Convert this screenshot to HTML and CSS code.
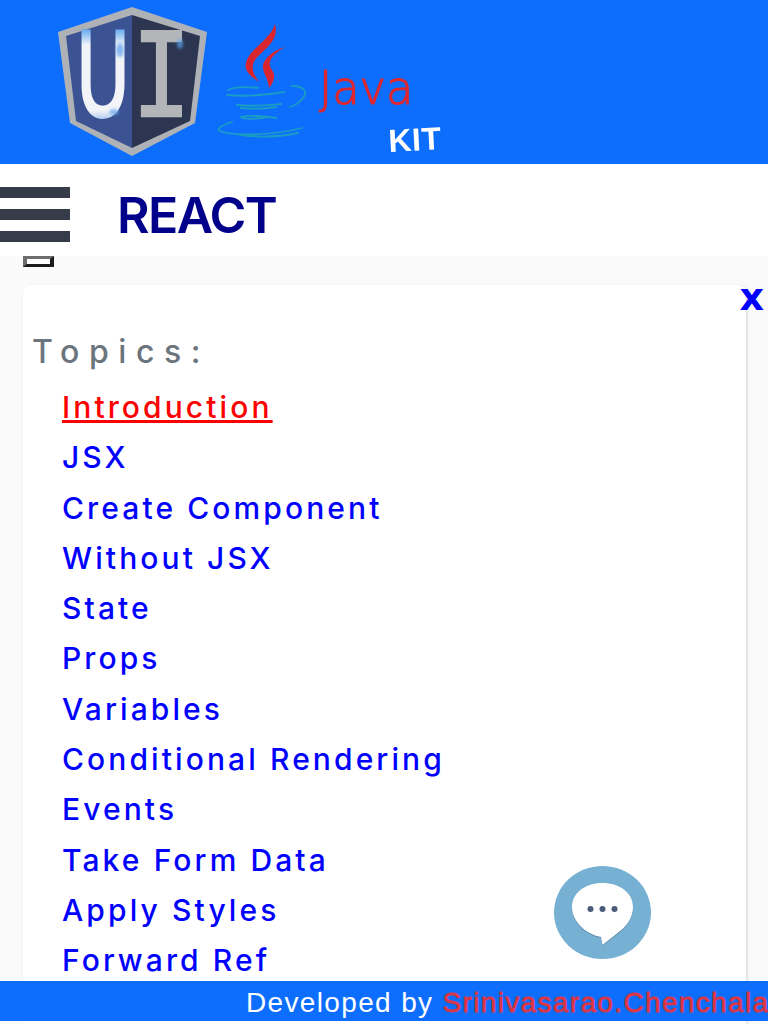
FILE: index.html
```html
<!DOCTYPE html>
<html lang="en">
<head>
<meta charset="utf-8">
<title>UI Java Kit - React</title>
<link rel="stylesheet" href="styles.css">
</head>
<body>
<header class="brand">
  <svg class="logo" viewBox="0 0 460 164" width="460" height="164" aria-label="UI Java Kit">
    <defs>
      <linearGradient id="uGrad" gradientUnits="userSpaceOnUse" x1="0" y1="-90" x2="0" y2="4">
        <stop offset="0" stop-color="#4a9bef"/>
        <stop offset="0.2" stop-color="#f0f3f8"/>
        <stop offset="0.9" stop-color="#f3f4f8"/>
        <stop offset="1" stop-color="#a9c8ee"/>
      </linearGradient>
    </defs>
    <polygon class="shield-rim" points="132,7 207,32 195,123 132,156 70,123 58,32"/>
    <polygon class="shield-left" points="132,15 132,148 76,121 66,36"/>
    <polygon class="shield-right" points="132,15 132,148 190,121 200,36"/>
    <text class="logo-u" transform="translate(103 116) scale(0.58 1)" text-anchor="middle">U</text>
    <ellipse class="logo-glint" cx="120" cy="50" rx="4" ry="7"/>
    <ellipse class="logo-glint" cx="114" cy="112" rx="5" ry="3"/>
    <text class="logo-i" transform="translate(161.500 116) scale(0.78 1.03)" text-anchor="middle">I</text>
    <ellipse class="logo-glint" cx="180" cy="44" rx="3" ry="5"/>
    <path class="steam" d="M275 24C272 34 262 42 254 50C246 58 244 66 247 71C250 76 255 79 259 82C254 75 250 68 255 60C262 50 280 42 275 24Z"/>
    <path class="steam" d="M285 47C272 51 262 60 263 68C264 75 268 78 269 88C274 82 276 76 272 70C267 63 270 56 285 47Z"/>
    <g class="cup">
      <path d="M228 90C236 86 250 87 258 88M227 95C245 97 265 95 284 92"/>
      <path d="M237 105C255 107 270 105 281 104M241 108C255 110 268 108 276 107"/>
      <path d="M241 117C250 115 266 116 276 118M242 118C250 120 262 118 268 117"/>
      <path d="M292 86C304 86 308 92 303 98C300 102 296 105 290 107"/>
      <path d="M232 122C222 125 216 129 220 131C232 136 270 136 302 128M236 134C255 138 280 137 298 133"/>
    </g>
    <text class="logo-java" transform="translate(319 104) scale(0.95 1)">Java</text>
    <text class="logo-kit" transform="translate(389 152) rotate(-3)">KIT</text>
  </svg>
</header>

<nav class="topbar">
  <div class="burger"><span></span><span></span><span></span></div>
  <h1 class="page-title">REACT</h1>
</nav>

<main class="content">
  <div class="toggle"></div>
  <section class="card">
    <a class="close" href="#">x</a>
    <h2 class="topics-title">Topics:</h2>
    <ul class="topics">
      <li><a class="active" href="#">Introduction</a></li>
      <li><a href="#">JSX</a></li>
      <li><a href="#">Create Component</a></li>
      <li><a href="#">Without JSX</a></li>
      <li><a href="#">State</a></li>
      <li><a href="#">Props</a></li>
      <li><a href="#">Variables</a></li>
      <li><a href="#">Conditional Rendering</a></li>
      <li><a href="#">Events</a></li>
      <li><a href="#">Take Form Data</a></li>
      <li><a href="#">Apply Styles</a></li>
      <li><a href="#">Forward Ref</a></li>
    </ul>
  </section>
</main>

<button class="chat" aria-label="Chat">
  <svg viewBox="0 0 97 93" width="97" height="93">
    <ellipse class="chat-bg" cx="48.5" cy="46.5" rx="48.5" ry="46.5"/>
    <path class="chat-shadow" d="M48.5 18C31 18 18 28 18 42C18 56 31 69 47 72L48.500 80L66 66C73 61 79 52 79 42C79 28 66 18 48.500 18Z"/>
    <path class="chat-bubble" d="M48.5 17C31 17 18 27 18 41C18 55 31 68 47 71L48.500 79L66 65C73 60 79 51 79 41C79 27 66 17 48.500 17Z"/>
    <circle class="chat-dot" cx="36.5" cy="43" r="3"/>
    <circle class="chat-dot" cx="48.5" cy="43" r="3"/>
    <circle class="chat-dot" cx="60.5" cy="43" r="3"/>
  </svg>
</button>

<footer class="footer">
  <span class="dev">Developed by</span>
  <span class="author">Srinivasarao.Chenchala</span>
</footer>
</body>
</html>
```
FILE: styles.css
```css
* { box-sizing: border-box; }
html, body { margin: 0; height: 100%; }
body {
  height: 1024px;
  overflow: hidden;
  background: #fafafa;
  font-family: Inter, "Liberation Sans", sans-serif;
  display: flex;
  flex-direction: column;
}
.brand { height: 164px; background: #0d6efd; flex: none; }
.logo { display: block; filter: blur(0.4px); }
.shield-rim { fill: #aeb1b6; }
.shield-left { fill: #3b5293; }
.shield-right { fill: #2c3650; }
.logo-u {
  font: 400 123px "Liberation Sans", sans-serif;
  fill: url(#uGrad);
  stroke: url(#uGrad);
  stroke-width: 4;
}
.logo-i {
  font: 400 125px "Liberation Mono", monospace;
  fill: #b3b5b9;
  stroke: #b3b5b9;
  stroke-width: 2.5;
}
.logo-glint { fill: #5aa2ee; opacity: 0.7; filter: blur(1.5px); }
.steam { fill: #d9262e; }
.cup { fill: none; stroke: #1a9cc4; stroke-width: 1.8; stroke-linecap: round; }
.logo-java { font: 200 47px "DejaVu Sans", sans-serif; fill: #e0262e; stroke: #e0262e; stroke-width: 1.1; }
.logo-kit { font: bold 32px "Liberation Sans", sans-serif; fill: #fff; letter-spacing: 0.5px; }

.topbar {
  height: 92px;
  padding-top: 10px;
  background: #fff;
  flex: none;
  display: flex;
  align-items: center;
  gap: 47px;
}
.burger {
  width: 70px;
  display: flex;
  flex-direction: column;
  gap: 11px;
  margin-top: -1px;
}
.burger span { height: 11px; background: #373c4b; display: block; }
.page-title {
  margin: 0;
  font-size: 50px;
  font-weight: 600;
  letter-spacing: -1.6px;
  color: #00008b;
}

.content {
  flex: 1;
  padding: 0 22px 0 23px;
  display: flex;
  flex-direction: column;
}
.toggle {
  width: 31px;
  height: 11px;
  background: #fff;
  border-style: solid;
  border-width: 3px 4px;
  border-color: #6e6e6e #1c1c1c #1c1c1c #6e6e6e;
  flex: none;
}
.card {
  position: relative;
  margin-top: 18px;
  flex: 1;
  background: #fff;
  border-radius: 8px 8px 0 0;
  box-shadow: 1px 1px 3px rgba(0, 0, 0, 0.16);
  padding: 47px 0 0 9px;
}
.close {
  position: absolute;
  right: -18px;
  top: -10px;
  font: bold 38px "DejaVu Sans", sans-serif;
  color: #00f;
  text-decoration: none;
}
.topics-title {
  margin: 0;
  font-size: 32px;
  line-height: 40px;
  font-weight: 550;
  letter-spacing: 9.6px;
  color: #6c757d;
}
.topics {
  list-style: none;
  margin: 16px 0 0;
  padding: 0 0 0 30px;
}
.topics li { height: 50.3px; line-height: 38px; }
.topics a {
  font-size: 30px;
  font-weight: 550;
  letter-spacing: 3.1px;
  color: #00f;
  text-decoration: none;
}
.topics a.active { color: #f00; text-decoration: underline; }

.chat {
  position: fixed;
  left: 554px;
  top: 866px;
  width: 97px;
  height: 93px;
  padding: 0;
  border: 0;
  background: none;
}
.chat svg { display: block; }
.chat-bg { fill: #76b0d3; }
.chat-shadow { fill: #5a8aa8; }
.chat-bubble { fill: #fff; }
.chat-dot { fill: #4a5a78; }

.footer {
  position: fixed;
  left: 0;
  right: 0;
  bottom: 3px;
  height: 40px;
  padding: 3px 0 0 246px;
  background: #0d6efd;
  display: flex;
  align-items: center;
  gap: 9px;
  font-family: "Liberation Sans", sans-serif;
  font-size: 28px;
  letter-spacing: 1.35px;
  white-space: nowrap;
  overflow: hidden;
}
.dev { color: #fff; }
.author { color: #dc3545; -webkit-text-stroke: 0.8px #dc3545; }
```
